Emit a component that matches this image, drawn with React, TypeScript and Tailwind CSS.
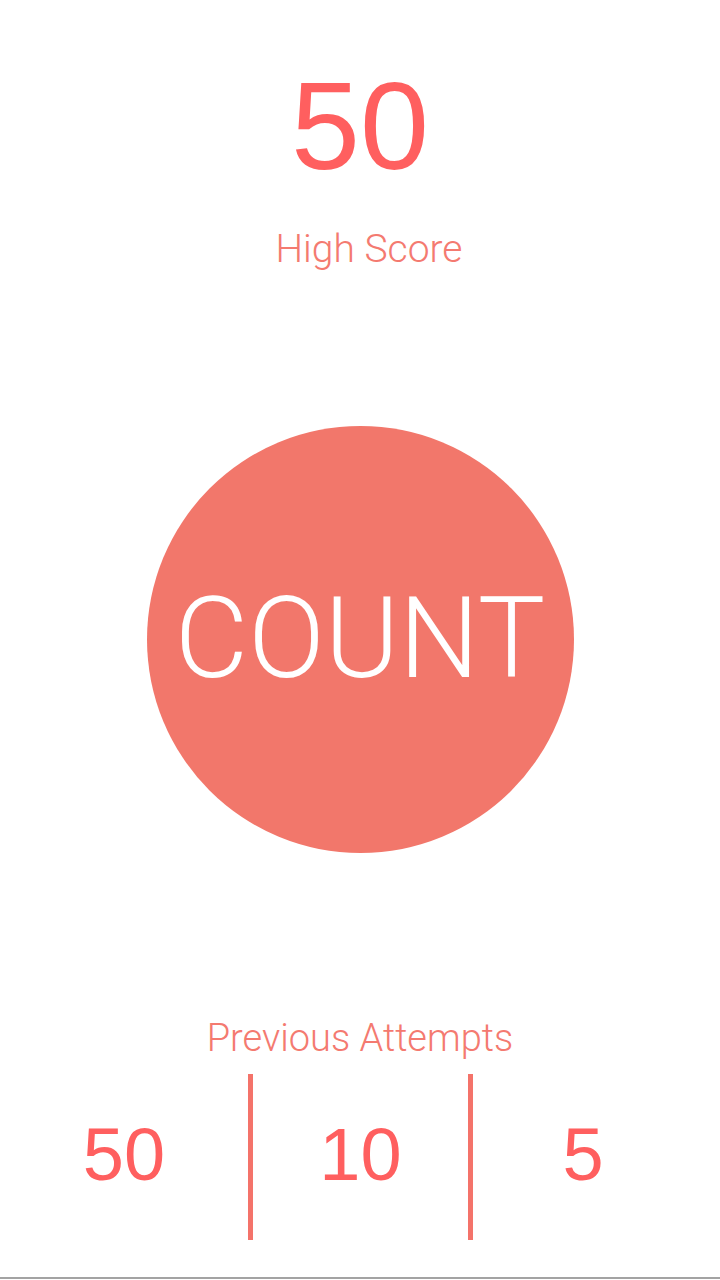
const numberFont = { fontFamily: '"Liberation Sans", Arial, sans-serif' };
const thinFont = { fontFamily: 'Roboto, "Liberation Sans", sans-serif' };

const attempts = [50, 10, 5];

export default function App() {
  return (
    <div className="flex min-h-[1280px] w-[720px] flex-col bg-white">
      {/* High score */}
      <div className="flex flex-col items-center">
        <p style={numberFont} className="mt-[64px] text-[124px] leading-none text-[#ff5f5f]">
          {attempts[0]}
        </p>
        <p style={thinFont} className="mt-[42px] pl-[18px] text-[39px] font-light leading-none text-[#f47a70]">
          High Score
        </p>
      </div>

      {/* Count button */}
      <div className="mt-[157px] flex justify-center">
        <button
          style={thinFont}
          className="flex h-[427px] w-[427px] items-center justify-center rounded-full bg-[#f2776b] pb-[2px] text-[113px] font-light leading-none text-white"
        >
          COUNT
        </button>
      </div>

      {/* Previous attempts */}
      <p style={thinFont} className="mt-[166px] text-center text-[38px] font-light leading-none text-[#f47a70]">
        Previous Attempts
      </p>
      <div style={numberFont} className="mt-[17px] flex h-[166px] items-center text-[74px] leading-none text-[#ff5f5f]">
        <div className="w-[248px] pb-[5px] text-center">{attempts[0]}</div>
        <div className="h-full w-[5px] bg-[#f4736a]" />
        <div className="w-[215px] pb-[5px] text-center">{attempts[1]}</div>
        <div className="h-full w-[5px] bg-[#f4736a]" />
        <div className="w-[220px] pb-[5px] text-center">{attempts[2]}</div>
      </div>

      <div className="mt-auto h-[2px] bg-[#a3a3a3]" />
      <div className="h-[1px]" />
    </div>
  );
}
